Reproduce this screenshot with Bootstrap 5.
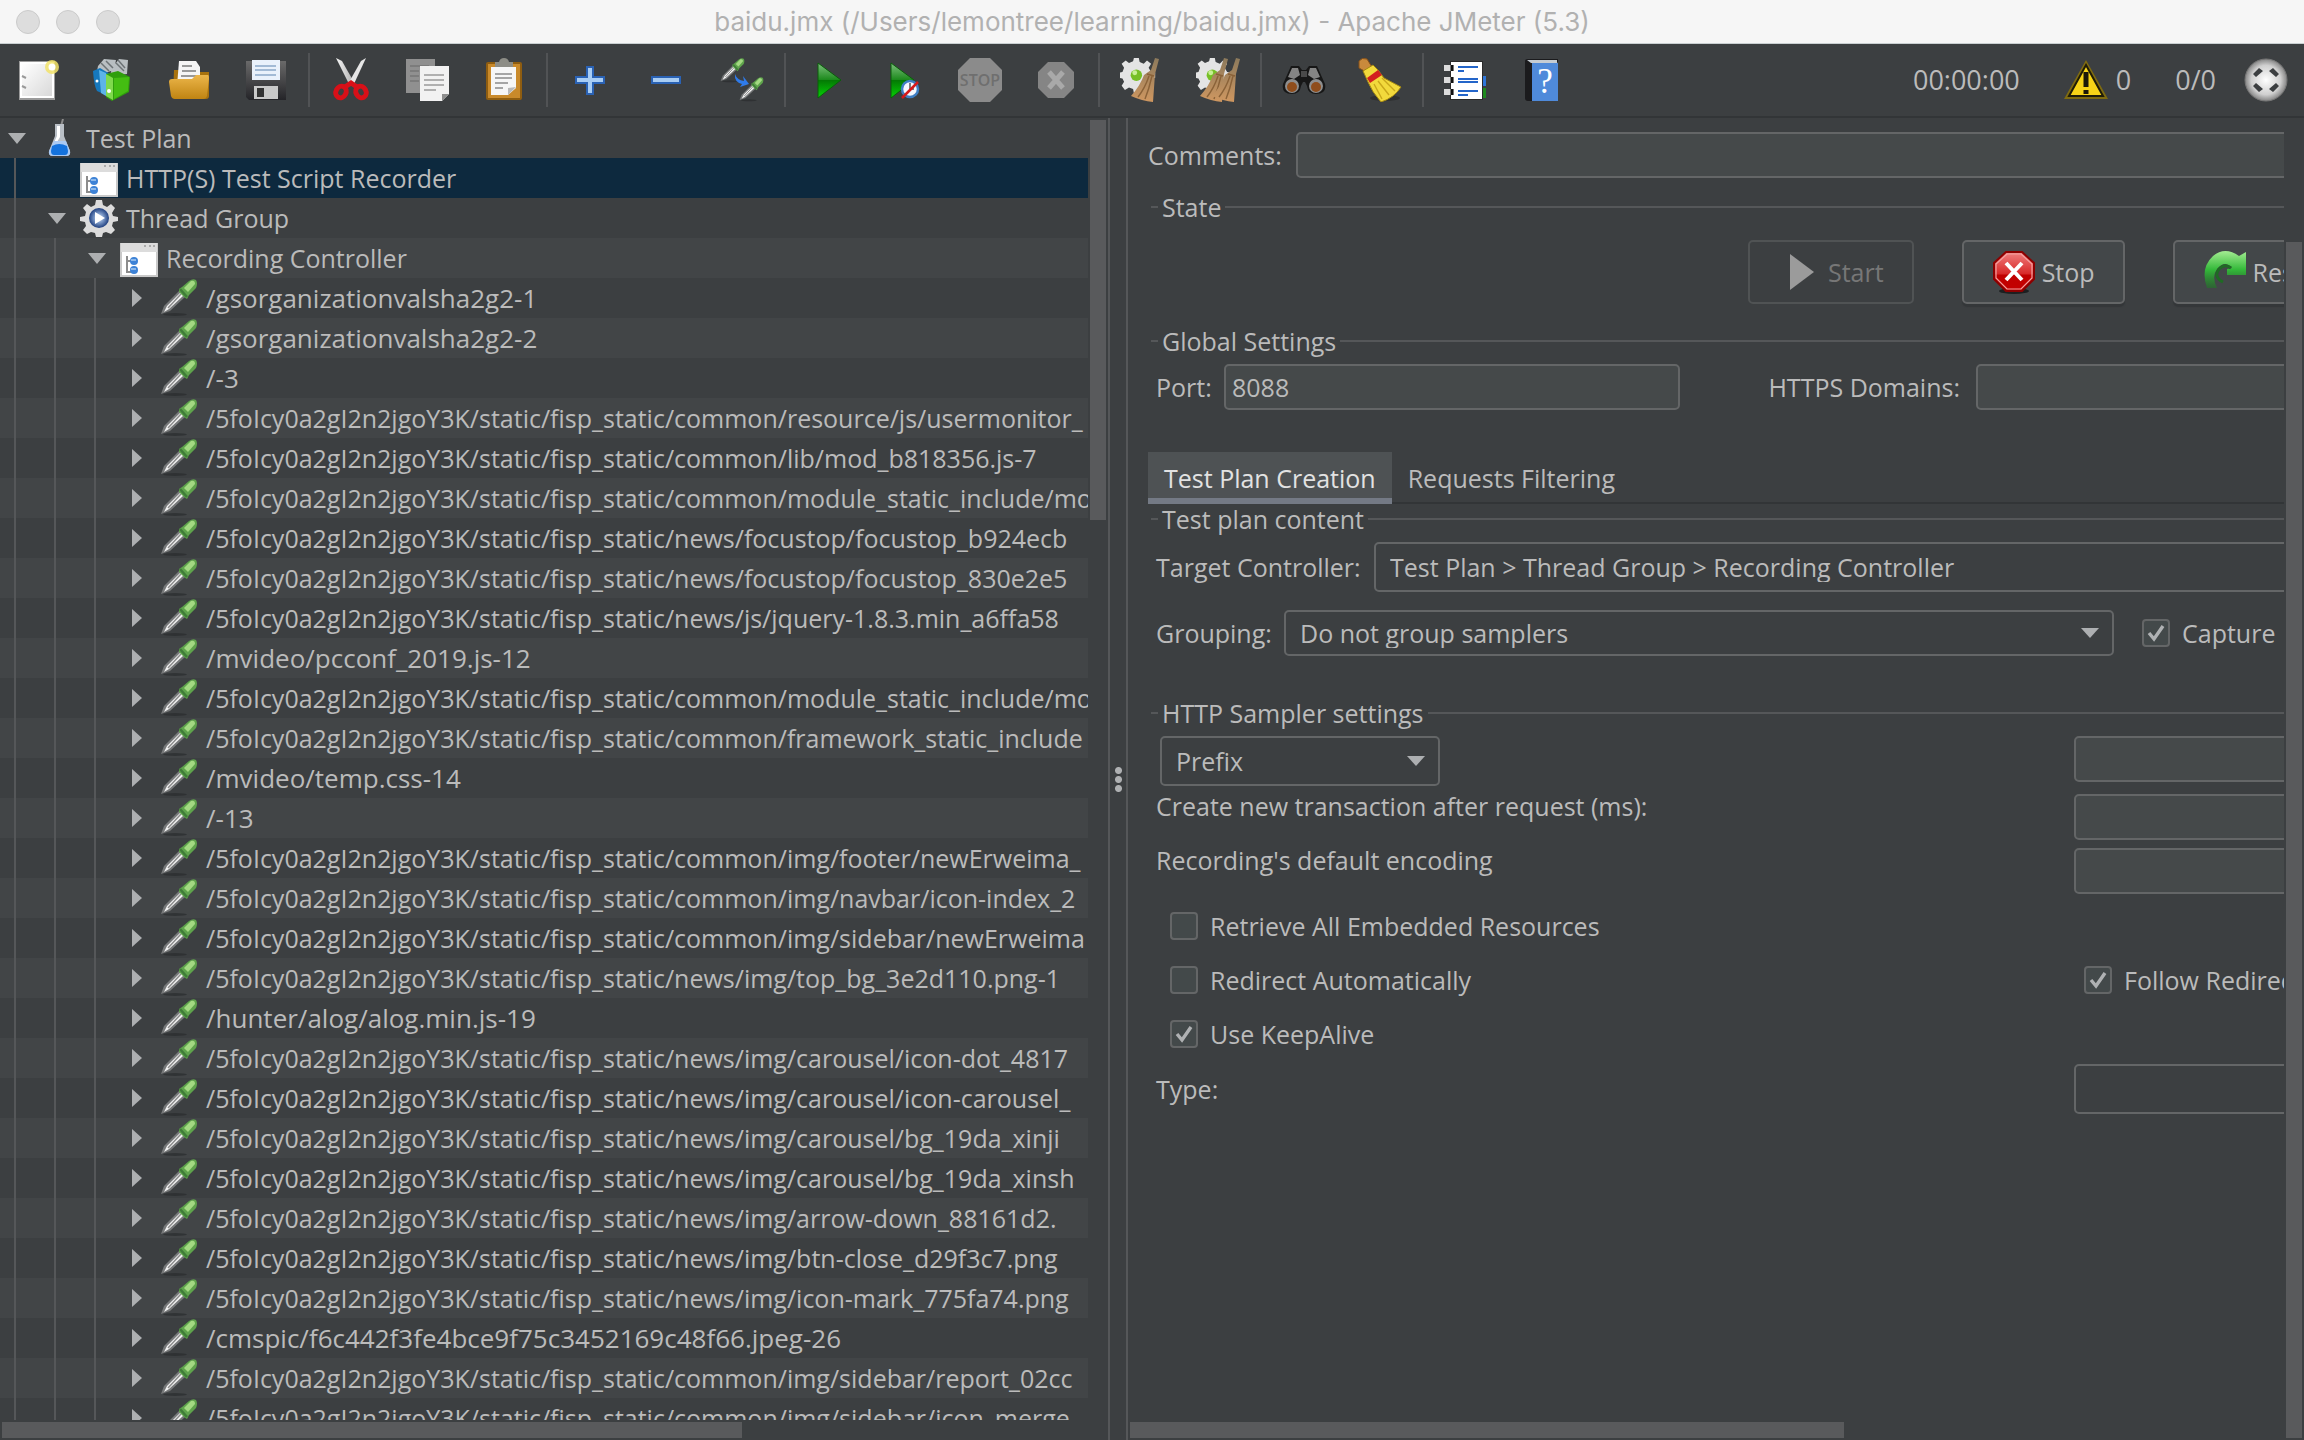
<!DOCTYPE html>
<html lang="en" data-bs-theme="dark">
<head>
<meta charset="utf-8">
<meta name="viewport" content="width=device-width, initial-scale=1">
<title>baidu.jmx - Apache JMeter (5.3)</title>
<link href="https://cdn.jsdelivr.net/npm/bootstrap@5.3.0/dist/css/bootstrap.min.css" rel="stylesheet">
<style>
  :root { --pane: #3c3f41; --stripe: #424547; --ink: #bbbbbb; --rule: #555759; --edge: #646667; --thumb: #595a5c; }
  body { background: var(--pane); color: var(--ink); font: 25px/30px "Open Sans", "Noto Sans", sans-serif; }

  .titlebar { height: 44px; background: #f6f6f6; border-bottom: 1px solid #c9cfd1; color: #b1b1b1; font: 26px/30px Inter, "Liberation Sans", sans-serif; }
  .lights { left: 16px; top: 10px; }
  .light { width: 24px; height: 24px; border-radius: 50%; background: #dddddd; border: 1px solid #cbcbcb; }

  .toolbar { height: 74px; border-bottom: 2px solid #323537; }
  .tool { width: 76px; height: 72px; padding: 0; border: 0; background: none; display: grid; place-items: center; }
  .tool svg { width: 44px; height: 44px; }
  .tool-sep { width: 2px; height: 54px; margin: 0 4px; background: #515355; }
  .status { font-size: 27px; padding-right: 16px; }
  .status-gap { margin-right: 44px; }
  .status-end { margin-right: 28px; }

  .workspace { display: grid; grid-template-columns: minmax(0, 277fr) 20px minmax(0, 294fr); }
  .tree-view { overflow: hidden; }
  .tree-row { height: 40px; color: var(--ink); white-space: nowrap; }
  .tree-row.alt { background: var(--stripe); }
  .tree-row.selected { background: #0d293e; }
  .guide, .twist { flex: 0 0 40px; height: 40px; }
  .guide { background: linear-gradient(var(--rule), var(--rule)) 14px 0 / 2px 100% no-repeat; }
  .twist { display: flex; align-items: center; padding-left: 8px; }
  .twist.down::before { content: ""; border: 9px solid transparent; border-top: 11px solid #adafb1; border-bottom: 0; }
  .twist.right::before { content: ""; margin-left: 4px; border: 9px solid transparent; border-left: 10px solid #adafb1; border-right: 0; }
  .row-icon { flex: 0 0 38px; width: 38px; height: 38px; margin-right: 8px; }
  .short-path { font-size: 26px; }

  .v-track { flex: 0 0 20px; padding: 2px 2px 0; }
  .v-thumb, .h-thumb { background: var(--thumb); }
  .v-track .v-thumb { height: 400px; }
  .h-track { flex: 0 0 20px; padding: 2px 2px 2px; }
  .h-thumb { height: 16px; }

  .splitter { border: solid var(--rule); border-width: 0 2px; }
  .grip { width: 7px; height: 27px; background: radial-gradient(circle at center, #afb1b3 3px, transparent 4px) 0 0 / 7px 9px; }

  .form-view { overflow: hidden; }
  .form-body { width: 162%; padding: 14px 0 0 20px; }
  .text-in, .pick, .act { border: 2px solid var(--edge); border-radius: 5px; color: var(--ink); font: inherit; }
  .text-in { height: 46px; padding: 0 6px; background: #45494a; min-width: 0; }
  .pick { appearance: none; width: 100%; height: 50px; padding: 0 14px; background: var(--pane); }
  .pick.slim { height: 46px; }
  .pick-box::after { content: ""; position: absolute; right: 15px; top: 50%; margin-top: -5px; border: 9px solid transparent; border-top: 10px solid #adafb1; border-bottom: 0; pointer-events: none; }
  .group-title { display: flex; align-items: center; gap: 4px; float: none; width: 100%; margin: 0; padding-left: 3px; font-size: 25px; line-height: 30px; white-space: nowrap; }
  .group-title::before, .group-title::after { content: ""; height: 2px; width: 7px; background: var(--rule); }
  .group-title::after { flex: 1; }
  .act { height: 64px; padding: 0 28px; background: #434749; display: flex; align-items: center; gap: 6px; box-shadow: 0 3px 1px #343739; }
  .act:disabled { background: none; border-color: #505354; color: #777777; box-shadow: none; }
  .act svg { width: 44px; height: 44px; }
  .state-row { margin: 18px 0 22px 600px; gap: 48px; }
  .state-group { margin-top: 14px; }

  .tab-strip { border-bottom: 2px solid #323537; height: 52px; margin-top: 42px; }
  .tab-btn { height: 52px; padding: 6px 16px 0; border: 0; border-bottom: 6px solid transparent; background: none; color: var(--ink); }
  .tab-btn.active { background: #4e5254; border-bottom-color: #747a85; color: #e2e2e2; }

  .pairs { display: grid; grid-template-columns: 926px 1fr; margin-top: 8px; }
  .short-label { line-height: 24px; }
  .tick-row { height: 28px; gap: 12px; }
  .tick { appearance: none; flex: none; width: 28px; height: 28px; margin: 0; border: 2px solid var(--edge); border-radius: 4px; background: #43494a; }
  .tick:checked { background: #43494a url("data:image/svg+xml,%3Csvg xmlns='http://www.w3.org/2000/svg' viewBox='0 0 24 24'%3E%3Cpath d='M5 12l5 6L19 5' fill='none' stroke='%23afb1b3' stroke-width='3.4'/%3E%3C/svg%3E") center / 24px; }
  .side-track { flex: 0 0 20px; padding: 124px 2px 2px; }
  .side-track .v-thumb { height: 100%; }
</style>
</head>
<body class="vh-100 d-flex flex-column overflow-hidden">

<svg width="0" height="0" class="position-absolute" aria-hidden="true">
  <defs>
    <linearGradient id="gGreen" x1="0" y1="0" x2="0" y2="1"><stop offset="0" stop-color="#7fc07f"/><stop offset=".48" stop-color="#1c8a1c"/><stop offset=".5" stop-color="#047a04"/><stop offset="1" stop-color="#05d305"/></linearGradient>
    <linearGradient id="gFolder" x1="0" y1="0" x2="0" y2="1"><stop offset="0" stop-color="#ecb64a"/><stop offset="1" stop-color="#c08412"/></linearGradient>
    <linearGradient id="gDisk" x1="0" y1="0" x2="0" y2="1"><stop offset="0" stop-color="#6a6a6a"/><stop offset="1" stop-color="#242428"/></linearGradient>
    <linearGradient id="gPaper" x1="0" y1="0" x2="1" y2="1"><stop offset="0" stop-color="#ffffff"/><stop offset="1" stop-color="#d9d9d9"/></linearGradient>
    <linearGradient id="gBlade" x1="0" y1="0" x2="1" y2="0"><stop offset="0" stop-color="#f7f7f7"/><stop offset="1" stop-color="#a9a9a9"/></linearGradient>
    <linearGradient id="gBroom" x1="0" y1="0" x2="0" y2="1"><stop offset="0" stop-color="#8d7a5c"/><stop offset="1" stop-color="#cf9760"/></linearGradient>
    <radialGradient id="gBall"><stop offset="0" stop-color="#ffffff"/><stop offset=".7" stop-color="#cfcfcf"/><stop offset="1" stop-color="#858585"/></radialGradient>
    <radialGradient id="gHub"><stop offset="0" stop-color="#dfe8f5"/><stop offset=".45" stop-color="#7f9cc9"/><stop offset="1" stop-color="#1f3f7f"/></radialGradient>
    <linearGradient id="gStop" x1="0" y1="0" x2="0" y2="1"><stop offset="0" stop-color="#f08080"/><stop offset=".55" stop-color="#d82a2a"/><stop offset=".6" stop-color="#c00000"/><stop offset="1" stop-color="#c40000"/></linearGradient>
    <linearGradient id="gRestart" x1="0" y1="0" x2="0" y2="1"><stop offset="0" stop-color="#a4ec92"/><stop offset=".5" stop-color="#34b93a"/><stop offset="1" stop-color="#1c7f22" stop-opacity=".5"/></linearGradient>

    <symbol id="dropper" viewBox="0 0 38 38">
      <ellipse cx="15" cy="35.500" rx="12" ry="1.500" fill="#2a2c2d" opacity=".7"/>
      <path d="M1 35L4 27L20 11L26 17L10 32Z" fill="#77797a"/>
      <path d="M4 33L7 27L21 13L24 16L9 30Z" fill="#f4f4f4"/>
      <path d="M8 29L21 15" stroke="#8c8c8c" stroke-width="1.500"/>
      <path d="M19 10L22 8L29 2Q33 -1 36 1Q38 4 36 9L29 16L27 20L24 18L19 13Z" fill="#5fa34c"/>
      <path d="M24 9L31 2Q35 1 35 5L28 13Z" fill="#a3d982"/>
      <path d="M20 10L27 18" stroke="#3f7d38" stroke-width="2.500"/>
    </symbol>
    <symbol id="window" viewBox="0 0 38 38">
      <rect x="0" y="4" width="38" height="34" fill="#c9c9c9"/>
      <rect x="1" y="4" width="36" height="9" fill="#dcdcdc"/>
      <path d="M24 7h2M29 7h2M33 7h2" stroke="#aaa" stroke-width="2"/>
      <rect x="2" y="13" width="34" height="23" fill="#fff"/>
      <path d="M7 17V33H12M7 22H12" stroke="#8c8c8c" stroke-width="2" fill="none"/>
      <circle cx="14" cy="22" r="4" fill="#3d82d6"/><circle cx="14" cy="31" r="4" fill="#3d82d6"/>
      <path d="M11 21h5M11 30h5" stroke="#a8cbf2" stroke-width="1.500"/>
    </symbol>
    <symbol id="flask" viewBox="0 0 38 38">
      <path d="M23 0L21 7" stroke="#8c8c8c" stroke-width="2"/>
      <path d="M15 5H24L24 17L30 32Q31 37 26 37H13Q8 37 9 32L15 17Z" fill="#b9bfc6"/>
      <path d="M17 7H20V18L14 28H12L17 17Z" fill="#fff"/>
      <path d="M14 22H26L30 32Q31 37 26 37H13Q8 37 9 32L11 28Z" fill="#a9c9f3"/>
      <path d="M12 27Q19 23 27 27L28 32Q28 36 25 36H14Q11 36 11 32Z" fill="#1472dd"/>
    </symbol>
    <symbol id="gear" viewBox="0 0 38 38">
      <path d="M16 1h6l1 5 4 2 4-3 4 4-3 5 1 3 5 1v4l-5 1-1 4 3 4-4 4-5-2-3 1-1 4h-6l-1-4-4-1-4 2-4-4 3-4-1-4-5-1v-4l5-1 1-4-3-4 4-4 4 3 4-2z" fill="#dcdcdc"/>
      <circle cx="19" cy="19" r="10" fill="url(#gHub)"/>
      <path d="M15 13L25 19L15 25Z" fill="#fff"/>
    </symbol>
    <symbol id="cog" viewBox="0 0 44 44">
      <path d="M17 0h6l1 5 5 2 4-4 5 4-3 5 3 5 5 1v6l-5 1-2 5 2 5-4 4-5-3-5 2-1 5h-6l-1-5-5-2-5 3-4-5 3-5-2-4-5-1v-6l5-1 2-5-3-5 5-4 4 3 5-2z" fill="#e4e4e4"/>
      <circle cx="20" cy="21" r="7" fill="#76bf26"/><circle cx="18" cy="18" r="3" fill="#c8ef96"/>
    </symbol>
    <symbol id="broomlet" viewBox="0 0 44 44">
      <path d="M37 0L41 1L37 16L35 44Q24 43 13 38Q22 28 26 17L33 12Z" fill="url(#gBroom)"/>
      <path d="M31 18Q27 30 20 39M34 18Q31 31 27 41M29 16L36 18" stroke="#8a6238" stroke-width="1.400" fill="none"/>
    </symbol>
  </defs>
</svg>

<header class="titlebar position-relative d-flex align-items-center justify-content-center flex-shrink-0">
  <div class="lights position-absolute d-flex gap-3"><span class="light"></span><span class="light"></span><span class="light"></span></div>
  <span>baidu.jmx (/Users/lemontree/learning/baidu.jmx) - Apache JMeter (5.3)</span>
</header>

<nav class="toolbar d-flex align-items-center flex-shrink-0" aria-label="Toolbar">
  <button class="tool" aria-label="New"><svg viewBox="0 0 44 44"><rect x="3" y="3" width="36" height="39" fill="#9b9b9b"/><rect x="4" y="4" width="34" height="36" fill="#fff"/><rect x="6" y="6" width="30" height="32" fill="url(#gPaper)"/><path d="M6 18l4 2M6 28l4 2" stroke="#999" stroke-width="2"/><circle cx="36" cy="9" r="7" fill="#f2e36a" opacity=".85"/><circle cx="36" cy="9" r="3.500" fill="#fff"/></svg></button>
  <button class="tool" aria-label="Templates"><svg viewBox="0 0 44 44"><path d="M6 8L12 1L24 2L22 12L4 18ZM20 10L27 1L36 2L35 16L18 18Z" fill="#b9bfc2"/><path d="M9 5l8 8M24 5l8 8M26 2l7 8M14 3l7 7" stroke="#6d7376" stroke-width="1.500"/><path d="M1 13L8 10L18 16V39L5 33Q2 28 1 13Z" fill="#1678bd"/><path d="M7 12L14 15V38L9 35Z" fill="#5db4e8"/><path d="M14 16L26 13L38 19L37 34L20 43L14 39Z" fill="#2f9e0c"/><path d="M14 16L21 20V42L14 38Z" fill="#7fd94c"/><path d="M22 20L37 19L36 33L22 41Z" fill="#44bd12"/><circle cx="17" cy="33" r="2" fill="#fff"/><circle cx="5" cy="23" r="1.500" fill="#fff"/></svg></button>
  <button class="tool" aria-label="Open"><svg viewBox="0 0 44 44"><path d="M6 12H18L20 14H41V38Q41 41 38 41H8Q5 41 5 38Z" fill="#a8720e"/><path d="M11 3H28L32 9V28H9Z" fill="#f5f5f5"/><path d="M14 8h10M14 13h14M13 18h15" stroke="#7b7b7b" stroke-width="1.600"/><path d="M1 24Q1 21 4 21H24L28 17H40Q41 17 41 21L39 38Q38 41 35 41H7Q4 41 3 38Z" fill="url(#gFolder)"/></svg></button>
  <button class="tool" aria-label="Save"><svg viewBox="0 0 44 44"><path d="M2 3H42V42H5L2 39Z" fill="url(#gDisk)"/><rect x="8" y="2" width="28" height="20" fill="#e9f1fb"/><path d="M11 8h21M11 12h21M11 17h21" stroke="#8ba8c9" stroke-width="1.500"/><rect x="10" y="28" width="24" height="13" fill="#c9c9c9"/><rect x="13" y="30" width="7" height="9" fill="#333"/></svg></button>
  <span class="tool-sep"></span>
  <button class="tool" aria-label="Cut"><svg viewBox="0 0 44 44"><path d="M6 0L12 3L25 26L20 28Z" fill="url(#gBlade)"/><path d="M36 0L31 3L18 26L23 28Z" fill="#e6e6e6"/><g fill="none" stroke="#d81018" stroke-width="5"><ellipse cx="11" cy="34" rx="5" ry="6" transform="rotate(28 11 34)"/><ellipse cx="31" cy="34" rx="5" ry="6" transform="rotate(-28 31 34)"/><path d="M15 29L21 25L27 29"/></g></svg></button>
  <button class="tool" aria-label="Copy"><svg viewBox="0 0 44 44"><rect x="0" y="1" width="29" height="34" fill="#909090"/><path d="M4 8h19M4 13h9M4 18h9M4 23h9" stroke="#757575" stroke-width="1.600"/><path d="M14 8H43V36L36 43H14Z" fill="#f2f2f2"/><path d="M18 17h20M18 22h20M18 27h20M18 32h12" stroke="#9a9a9a" stroke-width="1.600"/><path d="M43 36H36V43Z" fill="#8d8d8d"/></svg></button>
  <button class="tool" aria-label="Paste"><svg viewBox="0 0 44 44"><rect x="4" y="4" width="36" height="38" rx="2" fill="#8f5d10"/><rect x="6" y="6" width="32" height="34" fill="#c98a2b"/><path d="M9 9H34V30L26 37H9Z" fill="#f6f6f6"/><path d="M13 16h17M13 20h17M13 25h13M13 30h8" stroke="#8a8a8a" stroke-width="1.600"/><path d="M34 29L26 37V30Z" fill="#b9b9b9"/><path d="M13 9V4H17Q18 0 22 0Q26 0 27 4H31V9Z" fill="#8d8d86"/></svg></button>
  <span class="tool-sep"></span>
  <button class="tool" aria-label="Expand All"><svg viewBox="0 0 44 44"><path d="M19 9H25V19H36V25H25V36H19V25H8V19H19Z" fill="#a9cdf3" stroke="#2a62b4" stroke-width="2"/></svg></button>
  <button class="tool" aria-label="Collapse All"><svg viewBox="0 0 44 44"><rect x="8" y="19" width="28" height="6" fill="#a9cdf3" stroke="#2a62b4" stroke-width="2"/></svg></button>
  <button class="tool" aria-label="Toggle"><svg viewBox="0 0 44 44"><use href="#dropper" x="0" y="0" width="25" height="25"/><use href="#dropper" x="19" y="19" width="25" height="25"/><path d="M15 16Q17 22 24 23L23 18L29 26L20 29L22 26Q14 24 15 16Z" fill="#2f7bea"/></svg></button>
  <span class="tool-sep"></span>
  <button class="tool" aria-label="Start"><svg viewBox="0 0 44 44"><path d="M12 5L35 22L12 40Z" fill="url(#gGreen)" stroke="#0a5f0a" stroke-width="1"/></svg></button>
  <button class="tool" aria-label="Start no pauses"><svg viewBox="0 0 44 44"><path d="M9 5L32 22L9 40Z" fill="url(#gGreen)" stroke="#0a5f0a" stroke-width="1"/><circle cx="28" cy="31" r="8" fill="#f6f9ff" stroke="#3f7fc4" stroke-width="2.500"/><path d="M28 25V31H32" stroke="#555" stroke-width="1.500" fill="none"/><path d="M20 40L36 24" stroke="#d61a1a" stroke-width="2.500"/></svg></button>
  <button class="tool" aria-label="Stop" disabled><svg viewBox="0 0 44 44"><path d="M12 0H32L44 12V32L32 44H12L0 32V12Z" fill="#8b8b8b"/><text x="22" y="28" text-anchor="middle" font-family="Open Sans" font-weight="600" font-size="16" fill="#6f6f6f">STOP</text></svg></button>
  <button class="tool" aria-label="Shutdown" disabled><svg viewBox="0 0 44 44"><path d="M14 4H30L40 14V30L30 40H14L4 30V14Z" fill="#858585"/><path d="M15 14L29 30M29 14L15 30" stroke="#a9a9a9" stroke-width="5"/></svg></button>
  <span class="tool-sep"></span>
  <button class="tool" aria-label="Clear"><svg viewBox="0 0 44 44"><use href="#cog" x="0" y="0" width="36" height="36"/><use href="#broomlet" x="-2" y="0" width="44" height="44"/></svg></button>
  <button class="tool" aria-label="Clear All"><svg viewBox="0 0 44 44"><use href="#cog" x="0" y="0" width="36" height="36"/><use href="#broomlet" x="-9" y="0" width="44" height="44"/><use href="#broomlet" x="3" y="0" width="44" height="44"/></svg></button>
  <span class="tool-sep"></span>
  <button class="tool" aria-label="Search"><svg viewBox="0 0 44 44"><path d="M9 8H17L20 12H24L27 8H35L43 26Q45 36 34 36Q26 36 25 28L23 24H21L19 28Q18 36 10 36Q-1 36 1 26Z" fill="#171717"/><path d="M10 10H16L18 17L12 21L6 19ZM28 10H34L38 19L32 21L26 17Z" fill="#858585"/><rect x="19" y="13" width="6" height="6" fill="#4a4a4a"/><circle cx="10" cy="28" r="7" fill="#8e8e8e"/><circle cx="34" cy="28" r="7" fill="#8e8e8e"/><circle cx="10" cy="29" r="5" fill="#8f4d1c"/><circle cx="34" cy="29" r="5" fill="#8f4d1c"/></svg></button>
  <button class="tool" aria-label="Reset Search"><svg viewBox="0 0 44 44"><ellipse cx="27" cy="40" rx="15" ry="3" fill="#222" opacity=".5"/><path d="M1 3Q4 -1 9 1L14 9L8 14L1 10Z" fill="#c98a3c" stroke="#84501a"/><path d="M5 13L15 7L20 12L26 20L43 29Q36 40 23 44Q14 34 10 24Z" fill="#f2d93c" stroke="#a38712" stroke-width="1"/><path d="M9 20L20 12L24 17L12 25Z" fill="#d3201f"/><path d="M16 26L24 41M20 23L31 37M24 20L37 33" stroke="#c9a71b" stroke-width="1.400"/></svg></button>
  <span class="tool-sep"></span>
  <button class="tool" aria-label="Function Helper"><svg viewBox="0 0 44 44"><rect x="38" y="18" width="4" height="10" fill="#2f76d8"/><rect x="38" y="30" width="4" height="10" fill="#1e8a1e"/><rect x="6" y="3" width="33" height="39" fill="#2a2a2a"/><rect x="7" y="4" width="31" height="37" fill="#fff"/><path d="M14 9h20M14 21h20M14 24h20M14 33h20" stroke="#2465c9" stroke-width="2.200"/><path d="M14 13h6M14 37h10" stroke="#2465c9" stroke-width="2"/><g fill="#dcdcdc"><rect x="0" y="7" width="10" height="6"/><rect x="0" y="19" width="10" height="6"/><rect x="0" y="31" width="10" height="6"/></g><path d="M8 7v6M8 19v6M8 31v6" stroke="#111" stroke-width="3"/></svg></button>
  <button class="tool" aria-label="Help"><svg viewBox="0 0 44 44"><path d="M5 3Q5 1 8 1H38V4H12V43H8Q5 43 5 40Z" fill="#1b1b1d"/><path d="M7 2H37V5H11Z" fill="#c5ccd3"/><rect x="12" y="5" width="26" height="38" fill="#4f8ada"/><text x="25" y="35" text-anchor="middle" font-family="Liberation Serif" font-size="35" fill="#ffffff">?</text></svg></button>

  <div class="status d-flex align-items-center ms-auto">
    <span class="status-gap">00:00:00</span>
    <svg width="44" height="44" viewBox="0 0 44 44" aria-hidden="true"><path d="M22 2L44 41H0Z" fill="#7f6b10"/><path d="M22 7L39 38H5Z" fill="#f7d417" stroke="#1f1c08" stroke-width="2"/><path d="M22 14V29M22 32V36" stroke="#1c1908" stroke-width="5"/></svg>
    <span class="ms-2 status-gap">0</span>
    <span class="status-end">0/0</span>
    <svg width="44" height="44" viewBox="0 0 44 44" aria-hidden="true"><circle cx="22" cy="22" r="21" fill="url(#gBall)" stroke="#777"/><g fill="#3c3f41"><path d="M9 16L15 10L19 13L12 19ZM29 10L35 16L32 19L25 13ZM9 28L15 34L19 31L12 25ZM29 34L35 28L32 25L25 31Z"/></g></svg>
  </div>
</nav>

<main class="workspace flex-grow-1 overflow-hidden">
  <section class="d-flex flex-column overflow-hidden" aria-label="Test plan tree">
    <div class="d-flex flex-grow-1 overflow-hidden">
      <div class="tree-view flex-grow-1" id="tree" role="tree"></div>
      <div class="v-track"><div class="v-thumb"></div></div>
    </div>
    <div class="h-track"><div class="h-thumb" style="width:67%"></div></div>
  </section>

  <div class="splitter d-flex align-items-center justify-content-center"><span class="grip"></span></div>

  <section class="d-flex overflow-hidden" aria-label="HTTP(S) Test Script Recorder">
    <div class="d-flex flex-column flex-grow-1 overflow-hidden">
      <div class="form-view flex-grow-1">
        <form class="form-body">
          <div class="d-flex align-items-center">
            <label for="comments" style="width:148px">Comments:</label>
            <input id="comments" class="text-in flex-grow-1" type="text">
          </div>

          <fieldset class="state-group">
            <legend class="group-title">State</legend>
            <div class="d-flex state-row">
              <button type="button" class="act" disabled><svg viewBox="0 0 44 44"><path d="M12 4L36 22L12 40Z" fill="#9b9b9b"/></svg>Start</button>
              <button type="button" class="act"><svg viewBox="0 0 44 44"><ellipse cx="22" cy="41" rx="15" ry="3" fill="#1d1f20"/><path d="M14 2H30L42 13V29L30 41H14L2 29V13Z" fill="url(#gStop)" stroke="#8c0000" stroke-width="2"/><path d="M15 4H29L40 14V28L29 39H15L4 28V14Z" fill="none" stroke="#f2a0a0" stroke-width="1.200"/><path d="M14 13L30 30M30 13L14 30" stroke="#fff" stroke-width="4"/></svg>Stop</button>
              <button type="button" class="act"><svg viewBox="0 0 44 44"><path d="M4 38Q-3 18 10 6Q22 -4 36 6L43 2V25H24V19L29 18Q22 10 15 18Q8 26 14 38Z" fill="url(#gRestart)"/><path d="M20 32Q10 27 16 19Q22 13 28 18" fill="none" stroke="#1f6a24" stroke-width="3"/></svg>Restart</button>
            </div>
          </fieldset>

          <fieldset>
            <legend class="group-title">Global Settings</legend>
            <div class="d-flex align-items-center mt-2 ps-2">
              <label for="port" style="width:68px">Port:</label>
              <input id="port" class="text-in" style="width:456px" type="text" value="8088">
              <label for="domains" class="text-end" style="width:296px;padding-right:16px">HTTPS Domains:</label>
              <input id="domains" class="text-in flex-grow-1" type="text">
            </div>
          </fieldset>

          <div class="tab-strip d-flex" role="tablist">
            <button type="button" class="tab-btn active" role="tab" aria-selected="true">Test Plan Creation</button>
            <button type="button" class="tab-btn" role="tab" aria-selected="false">Requests Filtering</button>
          </div>

          <fieldset>
            <legend class="group-title">Test plan content</legend>
            <div class="d-flex align-items-center mt-2 ps-2">
              <label for="target" style="width:218px">Target Controller:</label>
              <div class="pick-box position-relative flex-grow-1"><select id="target" class="pick"><option>Test Plan &gt; Thread Group &gt; Recording Controller</option></select></div>
            </div>
            <div class="d-flex align-items-center ps-2" style="margin-top:18px">
              <label for="grouping" style="width:128px">Grouping:</label>
              <div class="pick-box position-relative" style="width:830px"><select id="grouping" class="pick slim"><option>Do not group samplers</option></select></div>
              <div class="tick-row d-flex align-items-center" style="margin-left:28px"><input id="capture" class="tick" type="checkbox" checked><label for="capture">Capture</label></div>
            </div>
          </fieldset>

          <fieldset style="margin-top:42px">
            <legend class="group-title">HTTP Sampler settings</legend>
            <div class="pairs">
              <div class="pick-box position-relative" style="width:280px;margin-left:12px"><select id="naming" class="pick" aria-label="Naming scheme"><option>Prefix</option></select></div>
              <input class="text-in" type="text" aria-label="Prefix value">
            </div>
            <div class="pairs">
              <label for="pause" class="short-label ps-2">Create new transaction after request (ms):</label>
              <input id="pause" class="text-in" type="text">
            </div>
            <div class="pairs">
              <label for="encoding" class="short-label ps-2">Recording's default encoding</label>
              <input id="encoding" class="text-in" type="text">
            </div>
            <div class="tick-row d-flex align-items-center" style="margin:18px 0 0 22px"><input id="embedded" class="tick" type="checkbox"><label for="embedded">Retrieve All Embedded Resources</label></div>
            <div class="pairs" style="margin-top:26px">
              <div class="tick-row d-flex align-items-center" style="margin-left:22px"><input id="auto" class="tick" type="checkbox"><label for="auto">Redirect Automatically</label></div>
              <div class="tick-row d-flex align-items-center" style="margin-left:10px"><input id="follow" class="tick" type="checkbox" checked><label for="follow">Follow Redirects</label></div>
            </div>
            <div class="tick-row d-flex align-items-center" style="margin:26px 0 0 22px"><input id="keep" class="tick" type="checkbox" checked><label for="keep">Use KeepAlive</label></div>
            <div class="pairs align-items-center" style="margin-top:16px">
              <label for="kind" class="ps-2">Type:</label>
              <div class="pick-box position-relative"><select id="kind" class="pick"><option></option></select></div>
            </div>
          </fieldset>
        </form>
      </div>
      <div class="h-track"><div class="h-thumb" style="width:62%"></div></div>
    </div>
    <div class="side-track"><div class="v-thumb"></div></div>
  </section>
</main>

<script>
  // Rows of the tree: [depth, twist, icon, label]
  const S = "/5foIcy0a2gI2n2jgoY3K/static/fisp_static/";
  const samplers = [
    "/gsorganizationvalsha2g2-1", "/gsorganizationvalsha2g2-2", "/-3",
    S + "common/resource/js/usermonitor_", S + "common/lib/mod_b818356.js-7",
    S + "common/module_static_include/mo", S + "news/focustop/focustop_b924ecb",
    S + "news/focustop/focustop_830e2e5", S + "news/js/jquery-1.8.3.min_a6ffa58",
    "/mvideo/pcconf_2019.js-12", S + "common/module_static_include/mo",
    S + "common/framework_static_include", "/mvideo/temp.css-14", "/-13",
    S + "common/img/footer/newErweima_", S + "common/img/navbar/icon-index_2",
    S + "common/img/sidebar/newErweima", S + "news/img/top_bg_3e2d110.png-1",
    "/hunter/alog/alog.min.js-19", S + "news/img/carousel/icon-dot_4817",
    S + "news/img/carousel/icon-carousel_", S + "news/img/carousel/bg_19da_xinji",
    S + "news/img/carousel/bg_19da_xinsh", S + "news/img/arrow-down_88161d2.",
    S + "news/img/btn-close_d29f3c7.png", S + "news/img/icon-mark_775fa74.png",
    "/cmspic/f6c442f3fe4bce9f75c3452169c48f66.jpeg-26",
    S + "common/img/sidebar/report_02cc", S + "common/img/sidebar/icon_merge"
  ];
  const rows = [
    [0, "down", "flask", "Test Plan"],
    [1, "", "window", "HTTP(S) Test Script Recorder"],
    [1, "down", "gear", "Thread Group"],
    [2, "down", "window", "Recording Controller"],
    ...samplers.map(s => [3, "right", "dropper", s])
  ];
  document.getElementById("tree").innerHTML = rows.map(([depth, twist, icon, label], i) => {
    const state = i === 1 ? " selected" : i % 2 ? " alt" : "";
    const guides = '<span class="guide"></span>'.repeat(depth);
    const kind = depth === 3 && !label.startsWith(S) ? ' class="short-path"' : "";
    return `<div class="tree-row d-flex align-items-center${state}" role="treeitem">${guides}<span class="twist ${twist}"></span><svg class="row-icon"><use href="#${icon}"/></svg><span${kind}>${label}</span></div>`;
  }).join("");
</script>
<script src="https://cdn.jsdelivr.net/npm/bootstrap@5.3.0/dist/js/bootstrap.bundle.min.js"></script>
</body>
</html>
